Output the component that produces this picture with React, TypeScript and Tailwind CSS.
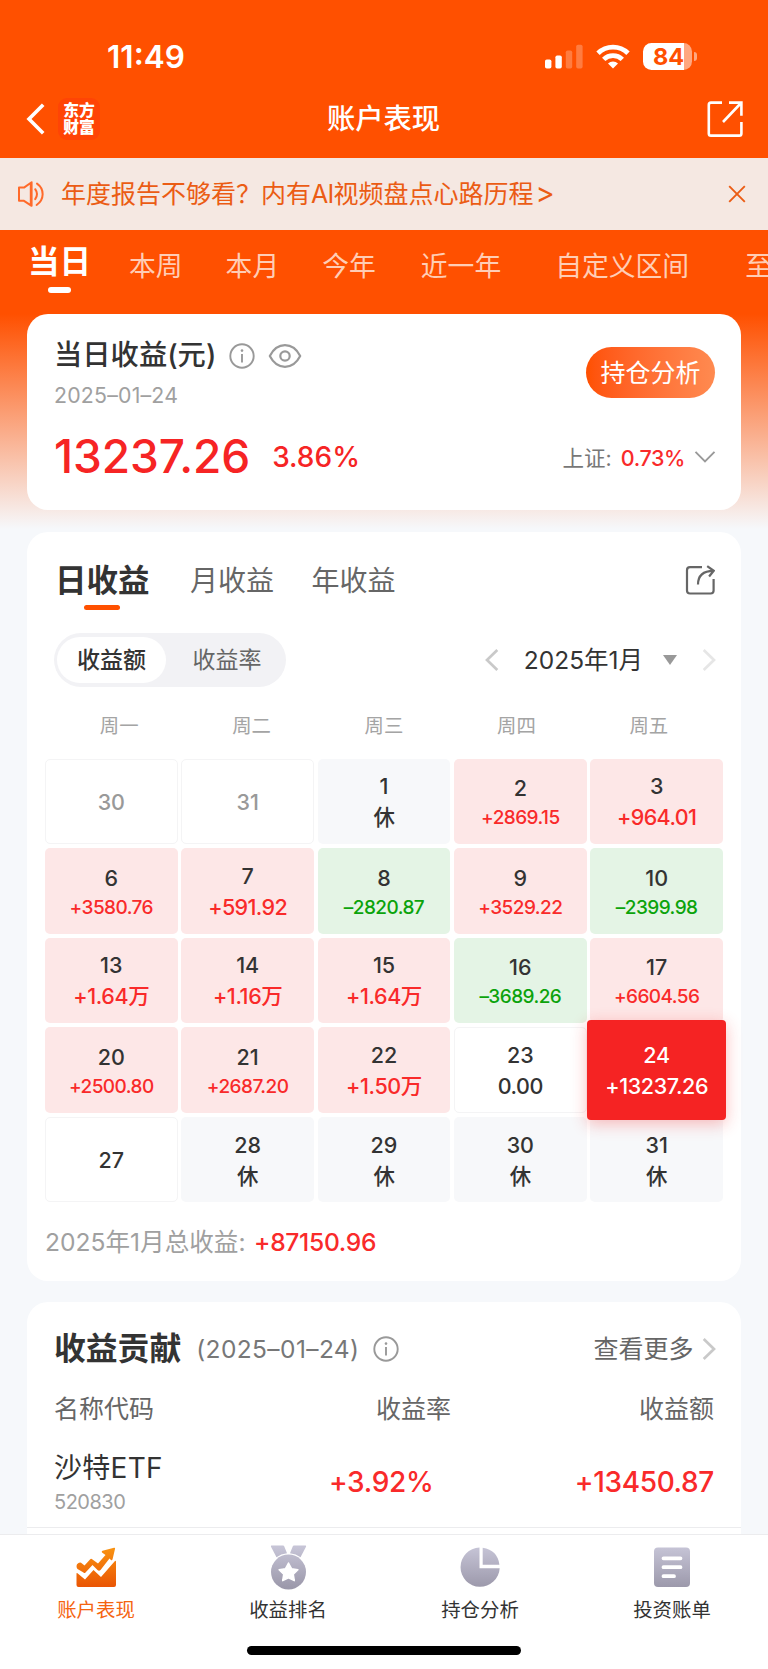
import React from "react";
import clsx from "clsx";

type Kind = "up" | "down" | "rest" | "empty" | "active";

interface Day {
  day: string;
  value?: string;
  kind: Kind;
  muted?: boolean;
}

const periods = [
  { label: "本周", className: "ml-[38px]" },
  { label: "本月", className: "ml-[43px]" },
  { label: "今年", className: "ml-[43px]" },
  { label: "近一年", className: "ml-[45px]" },
  { label: "自定义区间", className: "ml-[54px]" },
  { label: "至今", className: "ml-[56px]" },
];

const weekdays = ["周一", "周二", "周三", "周四", "周五"];

const days: Day[] = [
  { day: "30", kind: "empty", muted: true },
  { day: "31", kind: "empty", muted: true },
  { day: "1", value: "休", kind: "rest" },
  { day: "2", value: "+2869.15", kind: "up" },
  { day: "3", value: "+964.01", kind: "up" },
  { day: "6", value: "+3580.76", kind: "up" },
  { day: "7", value: "+591.92", kind: "up" },
  { day: "8", value: "–2820.87", kind: "down" },
  { day: "9", value: "+3529.22", kind: "up" },
  { day: "10", value: "–2399.98", kind: "down" },
  { day: "13", value: "+1.64万", kind: "up" },
  { day: "14", value: "+1.16万", kind: "up" },
  { day: "15", value: "+1.64万", kind: "up" },
  { day: "16", value: "–3689.26", kind: "down" },
  { day: "17", value: "+6604.56", kind: "up" },
  { day: "20", value: "+2500.80", kind: "up" },
  { day: "21", value: "+2687.20", kind: "up" },
  { day: "22", value: "+1.50万", kind: "up" },
  { day: "23", value: "0.00", kind: "empty" },
  { day: "24", value: "+13237.26", kind: "active" },
  { day: "27", kind: "empty" },
  { day: "28", value: "休", kind: "rest" },
  { day: "29", value: "休", kind: "rest" },
  { day: "30", value: "休", kind: "rest" },
  { day: "31", value: "休", kind: "rest" },
];

const cellStyle: Record<Kind, string> = {
  up: "bg-[#fde7e7]",
  down: "bg-[#e4f4e5]",
  rest: "bg-[#f7f8fa]",
  empty: "border border-[#f4f4f5] bg-white",
  active: "",
};

const valueColor: Record<Kind, string> = {
  up: "text-[#f92a2a]",
  down: "text-[#0ba30b]",
  rest: "text-[#333]",
  empty: "text-[#333]",
  active: "text-white",
};

function InfoIcon() {
  return (
    <svg width="26" height="26" viewBox="0 0 26 26" fill="none" stroke="#999" strokeWidth="1.9">
      <circle cx="13" cy="13" r="11.7" />
      <path d="M13 11v8.5" />
      <circle cx="13" cy="7.6" r="1.3" fill="#999" stroke="none" />
    </svg>
  );
}

function Chevron({ dir, className }: { dir: "left" | "right"; className?: string }) {
  return (
    <svg width="14" height="22" viewBox="0 0 14 22" fill="none" stroke="currentColor" strokeWidth="2.7" className={className}>
      <path d={dir === "left" ? "M12.3 1L2 11l10.3 10" : "M1.7 1L12 11 1.7 21"} />
    </svg>
  );
}

function StatusBar() {
  return (
    <div className="flex h-[80px] items-end justify-between pl-[107px] pr-[71px]">
      <span className="mb-[3px] text-[31.5px] leading-[40px] font-semibold">11:49</span>
      <div className="mb-[10px] flex items-center">
        <svg width="38" height="26" viewBox="0 0 38 26" fill="#fff">
          <rect x="0" y="15.5" width="6.4" height="9" rx="1.8" />
          <rect x="10.4" y="11.5" width="6.4" height="13" rx="1.8" />
          <rect x="20.8" y="6.5" width="6.4" height="18" rx="1.8" opacity="0.25" />
          <rect x="31.2" y="0.8" width="6.4" height="23.7" rx="1.8" opacity="0.25" />
        </svg>
        <svg className="ml-[13px]" width="34" height="26" viewBox="0 0 34 26" fill="none" stroke="#fff" strokeWidth="4.8">
          <path d="M2 9.2a21.4 21.4 0 0 1 30 0" />
          <path d="M7.7 15.4a13.3 13.3 0 0 1 18.6 0" />
          <path d="M17 24.6l-5-5.1a7.2 7.2 0 0 1 10 0z" fill="#fff" stroke="none" />
        </svg>
        <div className="ml-[13px] flex items-center">
          <div className="flex h-[27px] w-[49px] items-center justify-center rounded-[8.5px] bg-[linear-gradient(90deg,#fff_84%,#ffa780_84%)] pl-[2px] text-[23.5px] leading-[27px] font-bold text-[#ff5000]">
            84
          </div>
          <div className="ml-[2px] h-[9px] w-[3px] rounded-r-full bg-[#ffa780]" />
        </div>
      </div>
    </div>
  );
}

function NavBar() {
  return (
    <div className="flex h-[78px] items-center justify-between pl-[26px] pr-[24px]">
      <div className="flex w-[120px] items-center">
        <svg width="19" height="32" viewBox="0 0 19 32" fill="none" stroke="#fff" strokeWidth="3.6">
          <path d="M17.2 1.8L3 16l14.2 14.2" />
        </svg>
        <div className="ml-[13px] h-[42px] w-[42px] rounded-[9px] bg-[#ff4405] pt-[3.5px] text-center text-[15.8px] leading-[17.8px] font-black">
          东方
          <br />
          财富
        </div>
      </div>
      <h1 className="-ml-[3px] text-[28.3px] leading-[40px] font-medium">账户表现</h1>
      <div className="flex w-[120px] justify-end">
        <svg width="38" height="38" viewBox="0 0 38 38" fill="none" stroke="#fff" strokeWidth="2.6">
          <path d="M16 2.6H5Q2.8 2.6 2.8 4.8v28.6q0 2.2 2.2 2.2h28.2q2.2 0 2.2-2.2V22" />
          <path d="M23 2.6h12.4v13.2M35 3L17 22" />
        </svg>
      </div>
    </div>
  );
}

function Notice() {
  return (
    <div className="flex h-[71.5px] items-center bg-[#f5e8e2] pl-[17px] pr-[22px] text-[#eb5c14]">
      <svg width="28" height="28" viewBox="0 0 28 28" fill="none" stroke="#ff6a2a" strokeWidth="2" strokeLinejoin="round">
        <path d="M2 7.6h5l7.6-5.4v23.6L7 20.8H2zM13.800 2.500v23" />
        <path d="M18.2 9.2q3.6 5 0 10M20 3.600c7.6 5.4 7.6 15.8-.4 21.400" strokeLinecap="round" />
      </svg>
      <p className="ml-[16px] flex-1 text-[25px] leading-[36px]">
        年度报告不够看？内有<span className="-tracking-[0.8px]">AI</span>视频盘点心路历程<span className="ml-[2px] text-[29px] leading-none">&gt;</span>
      </p>
      <svg width="18" height="18" viewBox="0 0 18 18" fill="none" stroke="#eb5c14" strokeWidth="1.9">
        <path d="M1.2 1.2l15.6 15.6M16.8 1.2L1.2 16.8" />
      </svg>
    </div>
  );
}

function PeriodTabs() {
  return (
    <div className="flex h-[84.5px] overflow-hidden pt-[11px] pl-[28px] whitespace-nowrap">
      <div className="flex flex-col items-center">
        <span className="text-[31.5px] leading-[42px] font-semibold">当日</span>
        <span className="mt-[4.5px] h-[6px] w-[23px] rounded-full bg-white" />
      </div>
      {periods.map((p) => (
        <span key={p.label} className={clsx("mt-[5px] h-[40px] text-[26.8px] leading-[40px] text-[#ffcdb5]", p.className)}>
          {p.label}
        </span>
      ))}
    </div>
  );
}

function Summary() {
  return (
    <section className="h-[196px] rounded-[21px] bg-white pt-[20px] pr-[26px] pl-[27px]">
      <div className="flex justify-between">
        <div>
          <div className="flex h-[43px] items-center">
            <h2 className="text-[28.3px] leading-[43px] font-medium text-[#333]">当日收益(元)</h2>
            <span className="ml-[13px]"><InfoIcon /></span>
            <svg className="ml-[13px]" width="34" height="26" viewBox="0 0 34 26" fill="none" stroke="#999" strokeWidth="2.2">
              <path d="M1.8 13C5.6 5.600 10.600 2.200 17 2.200S28.400 5.600 32.200 13C28.400 20.400 23.400 23.800 17 23.800S5.600 20.400 1.800 13z" strokeLinejoin="round" />
              <circle cx="17" cy="13" r="4.700" />
            </svg>
          </div>
          <div className="mt-[2.5px] text-[21.3px] leading-[30px] tracking-[0.2px] text-[#a0a0a0]">2025–01–24</div>
        </div>
        <button className="mt-[13px] h-[51px] w-[129px] rounded-full bg-linear-to-r from-[#ff5000] to-[#ff8a50] text-[25px] leading-[50px] text-white">
          持仓分析
        </button>
      </div>
      <div className="mt-[18px] flex h-[56px] items-center">
        <span className="text-[46px] leading-[56px] font-medium tracking-[-0.1px] text-[#f62424]">13237.26</span>
        <span className="mt-[3px] ml-[22px] text-[28px] leading-[40px] font-medium text-[#f62424]">3.86%</span>
        <span className="mt-[4px] ml-auto text-[21.5px] leading-[30px] text-[#777]">上证:</span>
        <span className="mt-[4px] ml-[9px] text-[21.5px] leading-[30px] font-medium tracking-[-0.4px] text-[#f92a2a]">0.73%</span>
        <svg className="mt-[3px] -mr-[1px] ml-[9px]" width="22" height="14" viewBox="0 0 22 14" fill="none" stroke="#999" strokeWidth="1.9">
          <path d="M1.500 1.800L11 11.500l9.500-9.700" />
        </svg>
      </div>
    </section>
  );
}

function DayCell({ item }: { item: Day }) {
  // long amounts drop to a smaller size so they still fit the cell
  const small = item.kind !== "active" && (item.value?.length ?? 0) > 7;
  const wide = item.kind === "up" && !small && !item.value?.includes("万");
  const content = (
    <>
      <span className={clsx("text-[21.5px] leading-[31px] font-medium", item.kind === "active" ? "text-white" : item.muted ? "text-[#999]" : "text-[#333]")}>
        {item.day}
      </span>
      {item.value && (
        <span
          className={clsx(
            "font-medium",
            small ? "text-[19px] leading-[27px] tracking-[-0.55px]" : "text-[21.5px] leading-[31px]",
            wide && "tracking-[-0.6px]",
            !small && !wide && "tracking-[-0.4px]",
            valueColor[item.kind]
          )}
        >
          {item.value}
        </span>
      )}
    </>
  );

  if (item.kind === "active") {
    return (
      <div className="relative">
        <div className="absolute -inset-x-[3.5px] -inset-y-[7px] flex flex-col items-center justify-center rounded-[4px] bg-[#f52323] pt-[2px] shadow-[0_4px_16px_rgba(245,35,35,0.3)]">
          {content}
        </div>
      </div>
    );
  }
  return <div className={clsx("flex flex-col items-center justify-center rounded-[5px] pt-[2px]", cellStyle[item.kind])}>{content}</div>;
}

function CalendarCard() {
  return (
    <section className="mt-[21.5px] h-[749.5px] rounded-[21px] bg-white pt-[28px]">
      <div className="flex h-[52px] pr-[26px] pl-[28px]">
        <div className="relative h-[42px] text-[31.500px] leading-[42px] font-bold text-[#333]">
          日收益
          <span className="absolute top-[45px] left-[29px] h-[5.500px] w-[36px] rounded-full bg-[#ff5000]" />
        </div>
        <span className="ml-[40.5px] text-[28px] leading-[42px] text-[#666]">月收益</span>
        <span className="ml-[37.5px] text-[28px] leading-[42px] text-[#666]">年收益</span>
        <svg className="mt-[5.5px] ml-auto" width="30" height="30" viewBox="0 0 30 30" fill="none" stroke="#666" strokeWidth="2.2">
          <path d="M17 2.200H5q-3 0-3 3v20.300q0 3 3 3h20.600q3 0 3-3V14" />
          <path d="M13 19.500C13 11 18 5.800 28.500 5.800M22.200 1.200l6.500 4.600-4.600 5.700" />
        </svg>
      </div>

      <div className="mt-[21.500px] flex h-[54px] items-center pr-[25px] pl-[27px]">
        <div className="flex h-[54px] w-[232px] items-center rounded-full bg-[#f2f2f5] pl-[3px] text-[23px] leading-[46px]">
          <span className="h-[46px] w-[109px] rounded-full bg-white text-center font-medium text-[#333]">收益额</span>
          <span className="ml-[26.5px] text-[#666]">收益率</span>
        </div>
        <Chevron dir="left" className="ml-auto text-[#c9c9c9]" />
        <span className="ml-[25px] text-[24.500px] leading-[36px] text-[#333]">2025年1月</span>
        <span className="ml-[20px] border-x-[7px] border-t-[10px] border-x-transparent border-t-[#999]" />
        <Chevron dir="right" className="ml-[25px] text-[#e6e6e6]" />
      </div>

      <div className="mt-[24px] grid grid-cols-5 px-[26px]">
        {weekdays.map((w) => (
          <span key={w} className="text-center text-[19.400px] leading-[30px] text-[#a4a4a4]">
            {w}
          </span>
        ))}
      </div>

      <div className="mt-[17.500px] grid h-[443.800px] grid-cols-5 grid-rows-5 gap-x-[3.700px] gap-y-[4px] px-[18px]">
        {days.map((d, i) => (
          <DayCell key={i} item={d} />
        ))}
      </div>

      <p className="mt-[21.5px] flex pl-[18px] text-[24.600px] leading-[36px]">
        <span className="text-[#a0a0a0]">2025年1月总收益:</span>
        <span className="ml-[8.5px] font-medium tracking-[-0.3px] text-[#f92a2a]">+87150.96</span>
      </p>
    </section>
  );
}

function Contribution() {
  return (
    <section className="mt-[21px] h-[232px] rounded-t-[21px] bg-white pt-[26px]">
      <div className="flex h-[42px] items-center pr-[25px] pl-[27px]">
        <h2 className="text-[31.800px] leading-[42px] font-bold text-[#333]">收益贡献</h2>
        <span className="ml-[15px] text-[24.500px] leading-[42px] tracking-[0.4px] text-[#777]">(2025–01–24)</span>
        <span className="ml-[13.5px]"><InfoIcon /></span>
        <span className="ml-auto text-[25px] leading-[42px] text-[#666]">查看更多</span>
        <Chevron dir="right" className="ml-[8.5px] text-[#c9c9c9]" />
      </div>
      <div className="mt-[21px] flex pr-[27px] pl-[27px] text-[25px] leading-[36px] text-[#666]">
        <span className="w-[322px] flex-none">名称代码</span>
        <span className="flex-none">收益率</span>
        <span className="ml-auto">收益额</span>
      </div>
      <div className="mt-[14px] flex h-[87px] items-center border-b border-[#ececee] pr-[27px] pl-[27px]">
        <div className="-mt-[3px] w-[150px]">
          <div className="text-[28px] leading-[38px] tracking-[0.3px] text-[#333]">沙特ETF</div>
          <div className="text-[20px] leading-[30px] tracking-[-0.5px] text-[#a0a0a0]">520830</div>
        </div>
        <span className="-mt-[5px] w-[229.5px] text-right text-[28px] leading-[38px] font-medium tracking-[-0.3px] text-[#f92a2a]">+3.92%</span>
        <span className="-mt-[5px] ml-auto text-[28px] leading-[38px] font-medium tracking-[-0.35px] text-[#f92a2a]">+13450.87</span>
      </div>
    </section>
  );
}

const navItems = [
  {
    label: "账户表现",
    icon: (
      <g fill="url(#orange)">
        <path d="M0.500 26.500q0-1 1-.3L9 32.500 17.500 23l7.500 7L38.500 14.500q1.500-1.500 1.500.5V38q0 2-2 2H2.500q-2 0-2-2z" />
        <path d="M0.500 19q0-2 2-3 2-1 3.500.5L8.500 18.500 14 12.500q1-1.300 2.500 0L22 16.500 29.500 8 26 5.500q-.8-1 .5-1.700L38 .8q1.500-.2 1 1.200L36.500 12.500q-.8 1.500-1.800.3L33.500 11.500 24.500 23Q23 24.500 21.500 23L16.500 18 9.500 25.500Q8.500 26.500 7.500 25.500L1.500 22Q.5 21 .5 19z" />
      </g>
    ),
  },
  {
    label: "收益排名",
    icon: (
      <g fill="url(#grey)">
        <path d="M3.500-1.500h11.500q1 0 1.300 1L19 6.300Q13 7 8.500 10.300L3-.2q-.5-1.300.5-1.300zM37.500-1.500h-11.500q-1 0-1.300 1L22 6.300Q28 7 32.500 10.300L38-.2q.5-1.300-.5-1.300z" />
        <circle cx="20.500" cy="25" r="17.500" />
        <path d="M20.500 16l3 5.700 6.400 1.100-4.600 4.500 1 6.400-5.800-2.900-5.800 2.900 1-6.400-4.600-4.500 6.400-1.100z" fill="#fff" stroke="#fff" strokeWidth="1.500" strokeLinejoin="round" />
      </g>
    ),
  },
  {
    label: "持仓分析",
    icon: (
      <g fill="url(#grey)">
        <path d="M19.500 0.600V21.300H39.700A19.600 19.600 0 1 1 19.500 .6z" />
        <path d="M22.700 0.800Q37.500 3 39.400 17.700H22.700z" />
      </g>
    ),
  },
  {
    label: "投资账单",
    icon: (
      <g>
        <rect x="2" y="0.500" width="36" height="39.500" rx="4" fill="url(#grey)" />
        <path d="M11.500 11.300h17M11.500 20.200h17M11.500 29.200h10.500" stroke="#fff" strokeWidth="3.800" strokeLinecap="round" />
      </g>
    ),
  },
];

function TabBar() {
  return (
    <nav className="h-[135px] border-t border-[#ececee] bg-white">
      <div className="grid grid-cols-4 pt-[12px]">
        {navItems.map((n, i) => (
          <div key={n.label} className="flex flex-col items-center">
            <svg width="40" height="40" viewBox="0 0 40 40" className="overflow-visible">
              <defs>
                <linearGradient id="orange" x1="0" y1="0" x2="0" y2="40" gradientUnits="userSpaceOnUse">
                  <stop offset="0" stopColor="#f99412" />
                  <stop offset="1" stopColor="#ea5504" />
                </linearGradient>
                <linearGradient id="grey" x1="0" y1="0" x2="0" y2="40" gradientUnits="userSpaceOnUse">
                  <stop offset="0" stopColor="#c6c4d6" />
                  <stop offset="1" stopColor="#9c99ab" />
                </linearGradient>
              </defs>
              {n.icon}
            </svg>
            <span className={clsx("mt-[8px] text-[19.400px] leading-[30px]", i === 0 ? "text-[#f5640f]" : "text-[#333]")}>
              {n.label}
            </span>
          </div>
        ))}
      </div>
      <div className="mx-auto mt-[21px] h-[9px] w-[274px] rounded-full bg-black" />
    </nav>
  );
}

function App() {
  return (
    <div className="h-[1669px] w-[768px] overflow-hidden bg-[#f6f8fb] font-['Inter','Noto_Sans_CJK_SC',sans-serif]">
      <div className="h-[1534px] overflow-hidden bg-[linear-gradient(180deg,#ff5000_0px,#ff5000_314px,#f6f8fb_529px)]">
        <header className="text-white">
          <StatusBar />
          <NavBar />
          <Notice />
          <PeriodTabs />
        </header>
        <main className="px-[27px]">
          <Summary />
          <CalendarCard />
          <Contribution />
        </main>
      </div>
      <TabBar />
    </div>
  );
}

export default App;
